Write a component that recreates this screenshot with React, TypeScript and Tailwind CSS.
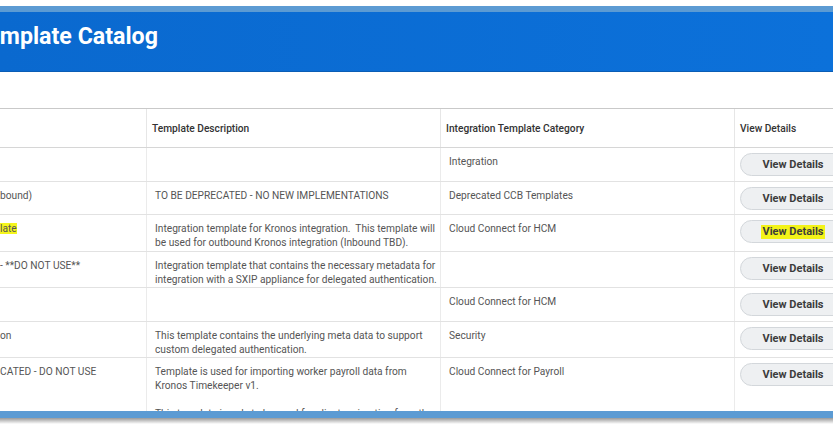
import React from "react";

type Row = {
  name: string;
  nameHi?: boolean;
  desc: string[];
  category: string;
  btnHi?: boolean;
  h: string;
};

const rows: Row[] = [
  { name: "", desc: [], category: "Integration", h: "h-[34px]" },
  {
    name: "bound)",
    desc: ["TO BE DEPRECATED - NO NEW IMPLEMENTATIONS"],
    category: "Deprecated CCB Templates",
    h: "h-[33px]",
  },
  {
    name: "late",
    nameHi: true,
    desc: [
      "Integration template for Kronos integration.  This template will",
      "be used for outbound Kronos integration (Inbound TBD).",
    ],
    category: "Cloud Connect for HCM",
    btnHi: true,
    h: "h-[37px]",
  },
  {
    name: "- **DO NOT USE**",
    desc: [
      "Integration template that contains the necessary metadata for",
      "integration with a SXIP appliance for delegated authentication.",
    ],
    category: "",
    h: "h-[36px]",
  },
  { name: "", desc: [], category: "Cloud Connect for HCM", h: "h-[34px]" },
  {
    name: "on",
    desc: [
      "This template contains the underlying meta data to support",
      "custom delegated authentication.",
    ],
    category: "Security",
    h: "h-[36px]",
  },
  {
    name: "CATED - DO NOT USE",
    desc: [
      "Template is used for importing worker payroll data from",
      "Kronos Timekeeper v1.",
      "",
      "This template is only to be used for clients migrating from the",
    ],
    category: "Cloud Connect for Payroll",
    h: "h-[80px]",
  },
];

const ViewDetails = ({ hi = false }: { hi?: boolean }) => (
  <div className="h-[23px] w-[106px] shrink-0 rounded-l-full rounded-r-full border border-[#d3d7db] bg-[#eef0f2] flex items-center justify-center">
    <span
      className={`text-[11px] font-bold text-[#3c3c3c] leading-[14px] px-[1px] ${
        hi ? "bg-[#f3f318]" : ""
      }`}
    >
      View Details
    </span>
  </div>
);

export default function App() {
  return (
    <div
      className="w-[833px] h-[437px] bg-white overflow-hidden"
      style={{ fontFamily: "Roboto, 'Liberation Sans', sans-serif" }}
    >
      <div className="h-[6px]" />
      <div className="h-[405px] border-t-[6px] border-[#5c9bd3] flex flex-col overflow-hidden">
        {/* title bar */}
        <div className="h-[60px] shrink-0 bg-gradient-to-r from-[#0a69cf] to-[#0c71da] border-b border-[#0a5db5] flex items-center">
          <h1 className="text-[23.2px] font-bold text-white whitespace-nowrap -ml-[26px] leading-none -mt-[10px]">
            Template Catalog
          </h1>
        </div>
        <div className="h-[36px] shrink-0" />

        {/* table */}
        <div className="flex-1 overflow-hidden border-t border-[#c9c9c9] text-[10.2px] leading-[14px]">
          <div className="grid grid-cols-[147px_294px_294px_98px] h-[39px] border-b border-[#d6d6d6] text-[#333] font-medium">
            <div className="border-r border-[#e6e6e6]" />
            <div className="border-r border-[#e6e6e6] px-[5px] pt-[13px]">Template Description</div>
            <div className="border-r border-[#e6e6e6] px-[5px] pt-[13px]">Integration Template Category</div>
            <div className="px-[5px] pt-[13px] whitespace-nowrap">View Details</div>
          </div>

          {rows.map((r, i) => (
            <div
              key={i}
              className={`grid grid-cols-[147px_294px_294px_98px] border-b border-[#e2e2e2] text-[#555] ${r.h}`}
            >
              <div className="border-r border-[#ebebeb] pt-[7px] whitespace-nowrap overflow-hidden">
                {r.name && (
                  <span className={r.nameHi ? "bg-[#f5f51c]" : ""}>{r.name}</span>
                )}
              </div>
              <div className="border-r border-[#ebebeb] px-[8px] pt-[7px] overflow-hidden">
                {r.desc.map((d, j) => (
                  <div key={j} className="h-[14px] whitespace-pre">
                    {d}
                  </div>
                ))}
              </div>
              <div className="border-r border-[#ebebeb] px-[8px] pt-[7px] whitespace-nowrap">
                {r.category}
              </div>
              <div className="pl-[5px] pt-[5px] overflow-visible">
                <ViewDetails hi={r.btnHi} />
              </div>
            </div>
          ))}
        </div>
      </div>
      {/* bottom frame edge */}
      <div className="h-[7px] bg-[#5c9bd3]" />
      <div className="h-[6px] bg-gradient-to-b from-[#9a9a9a] to-white" />
    </div>
  );
}
